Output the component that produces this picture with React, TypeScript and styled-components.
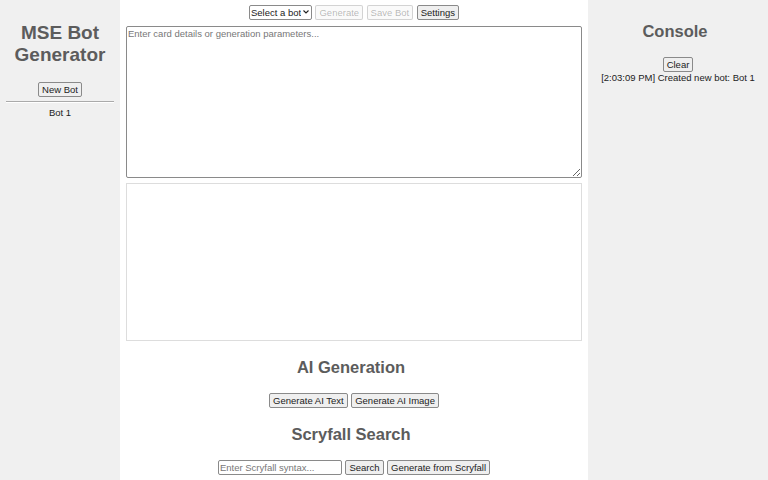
import styled, { createGlobalStyle } from 'styled-components';

const GlobalStyle = createGlobalStyle`
  html, body {
    margin: 0;
    padding: 0;
    height: 100%;
  }
  body {
    font-family: "Liberation Sans", Arial, sans-serif;
    font-size: 9.5px;
    color: #222;
    background: #fff;
  }
  #root {
    height: 100%;
  }
`;

const Layout = styled.div`
  display: flex;
  height: 480px;
  overflow: hidden;
`;

const Sidebar = styled.aside<{ $width: number }>`
  width: ${(p) => p.$width}px;
  flex: none;
  background: #f0f0f0;
  padding: 6px;
  box-sizing: border-box;
  display: flex;
  flex-direction: column;
  align-items: center;
  text-align: center;
`;

const Main = styled.main`
  flex: 1;
  padding: 5px 6px;
  box-sizing: border-box;
  display: flex;
  flex-direction: column;
  align-items: stretch;
`;

const Title = styled.h1`
  font-size: 19px;
  line-height: 22px;
  font-weight: bold;
  color: #5c5c5c;
  margin: 16px 0;
`;

const Heading = styled.h2`
  font-size: 16.5px;
  line-height: 19px;
  font-weight: bold;
  color: #5c5c5c;
  text-align: center;
  margin: 16.5px 0;
  padding-right: 6px;
`;

const ConsoleHeading = styled(Heading)`
  margin: 15.5px 0 16.5px;
`;

const Button = styled.button`
  font-family: "Liberation Sans", Arial, sans-serif;
  font-size: 9.5px;
  line-height: 11px;
  padding: 1px 3px;
  color: #222;
  background: #efefef;
  border: 1px solid #8a8a8a;
  border-radius: 2px;
  box-sizing: border-box;
  height: 15px;

  &:disabled {
    color: rgba(16, 16, 16, 0.3);
    background: rgba(239, 239, 239, 0.3);
    border-color: rgba(118, 118, 118, 0.3);
  }
`;

const SelectWrap = styled.span`
  position: relative;
  display: inline-flex;
`;

const Select = styled.select`
  appearance: none;
  font-family: "Liberation Sans", Arial, sans-serif;
  font-size: 9.5px;
  width: 63px;
  height: 15px;
  padding: 0 10px 0 1px;
  border: 1px solid #8a8a8a;
  border-radius: 2px;
  background: #fff;
  color: #222;
`;

const Chevron = styled.svg`
  position: absolute;
  right: 3px;
  top: 5px;
  pointer-events: none;
`;

const Row = styled.div`
  display: flex;
  justify-content: center;
  align-items: center;
  gap: 3.5px;
`;

const TextArea = styled.textarea`
  margin-top: 6px;
  height: 152px;
  box-sizing: border-box;
  border: 1px solid #8a8a8a;
  border-radius: 2px;
  padding: 1px 1px;
  font-family: "Liberation Sans", Arial, sans-serif;
  font-size: 9.5px;
  resize: vertical;

  &::placeholder {
    color: #777;
  }
`;

const Preview = styled.div`
  margin-top: 5px;
  height: 158px;
  box-sizing: border-box;
  border: 1px solid #ddd;
  background: #fff;
`;

const SearchInput = styled.input`
  font-family: "Liberation Sans", Arial, sans-serif;
  font-size: 9.5px;
  width: 124px;
  height: 15px;
  box-sizing: border-box;
  padding: 0 1px;
  border: 1px solid #8a8a8a;
  border-radius: 2px;

  &::placeholder {
    color: #777;
  }
`;

const Divider = styled.hr`
  align-self: stretch;
  border: none;
  border-top: 1px solid #aaa;
  border-bottom: 1px solid #fff;
  margin: 4px 0 4px;
`;

const BotItem = styled.div`
  font-size: 9.5px;
  line-height: 12px;
`;

const LogLine = styled.div`
  font-size: 9.5px;
  line-height: 12px;
  white-space: nowrap;
`;

export default function App() {
  return (
    <>
      <GlobalStyle />
      <Layout>
        <Sidebar $width={120}>
          <Title>
            MSE Bot
            <br />
            Generator
          </Title>
          <Button>New Bot</Button>
          <Divider />
          <BotItem>Bot 1</BotItem>
        </Sidebar>
        <Main>
          <Row>
            <SelectWrap>
              <Select defaultValue="">
                <option value="">Select a bot</option>
              </Select>
              <Chevron width="6" height="4" viewBox="0 0 6 4">
                <path d="M0.5 0.5 L3 3 L5.5 0.5" fill="none" stroke="#222" strokeWidth="1.1" />
              </Chevron>
            </SelectWrap>
            <Button disabled>Generate</Button>
            <Button disabled>Save Bot</Button>
            <Button>Settings</Button>
          </Row>
          <TextArea placeholder="Enter card details or generation parameters..." />
          <Preview />
          <Heading>AI Generation</Heading>
          <Row>
            <Button>Generate AI Text</Button>
            <Button>Generate AI Image</Button>
          </Row>
          <Heading>Scryfall Search</Heading>
          <Row>
            <SearchInput placeholder="Enter Scryfall syntax..." />
            <Button>Search</Button>
            <Button>Generate from Scryfall</Button>
          </Row>
        </Main>
        <Sidebar $width={180}>
          <ConsoleHeading>Console</ConsoleHeading>
          <Button>Clear</Button>
          <LogLine>[2:03:09 PM] Created new bot: Bot 1</LogLine>
        </Sidebar>
      </Layout>
    </>
  );
}
